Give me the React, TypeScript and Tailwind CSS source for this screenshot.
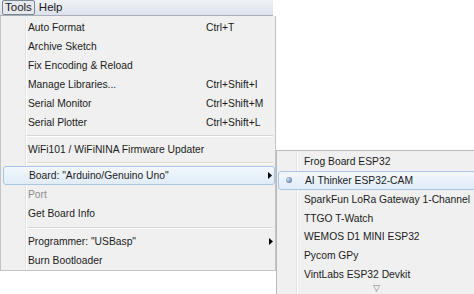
import React from 'react';

type Item =
  | { kind: 'sep'; h: string }
  | { kind: 'item'; label: string; shortcut?: string; sub?: boolean; active?: boolean; disabled?: boolean };

const toolsItems: Item[] = [
  { kind: 'item', label: 'Auto Format', shortcut: 'Ctrl+T' },
  { kind: 'item', label: 'Archive Sketch' },
  { kind: 'item', label: 'Fix Encoding & Reload' },
  { kind: 'item', label: 'Manage Libraries...', shortcut: 'Ctrl+Shift+I' },
  { kind: 'item', label: 'Serial Monitor', shortcut: 'Ctrl+Shift+M' },
  { kind: 'item', label: 'Serial Plotter', shortcut: 'Ctrl+Shift+L' },
  { kind: 'sep', h: 'h-[8px]' },
  { kind: 'item', label: 'WiFi101 / WiFiNINA Firmware Updater' },
  { kind: 'sep', h: 'h-[7px]' },
  { kind: 'item', label: 'Board: "Arduino/Genuino Uno"', sub: true, active: true },
  { kind: 'item', label: 'Port', disabled: true },
  { kind: 'item', label: 'Get Board Info' },
  { kind: 'sep', h: 'h-[9px]' },
  { kind: 'item', label: 'Programmer: "USBasp"', sub: true },
  { kind: 'item', label: 'Burn Bootloader' },
];

const boards = [
  'Frog Board ESP32',
  'AI Thinker ESP32-CAM',
  'SparkFun LoRa Gateway 1-Channel',
  'TTGO T-Watch',
  'WEMOS D1 MINI ESP32',
  'Pycom GPy',
  'VintLabs ESP32 Devkit',
];

const SubArrow = () => (
  <svg width="4" height="7" viewBox="0 0 4 7" className="shrink-0">
    <path d="M0 0 L4 3.5 L0 7 Z" fill="#000" />
  </svg>
);

const App: React.FC = () => {
  return (
    <div className="relative w-[474px] h-[294px] bg-white overflow-hidden text-[10.3px] text-[#1b1b1b] font-['Liberation_Sans',Arial,sans-serif]">
      {/* menu bar */}
      <div className="w-[273px] h-[16px] flex items-stretch bg-gradient-to-b from-[#eef1f6] to-[#dce2ec] border-b border-[#a9afb8] text-[11.5px]">
        <div className="ml-[2px] px-[2px] flex items-center border border-[#7d8590] rounded-[2px] bg-[#e4e8ef]">Tools</div>
        <div className="px-[4px] flex items-center">Help</div>
      </div>

      {/* Tools dropdown */}
      <div className="w-[276px] bg-[#f0f0f0] border-l border-r border-b border-[#c4c4c4] pt-[2px] flex">
        <div className="w-[25px] shrink-0 border-r border-[#e2e3e3]" />
        <div className="flex-1 flex flex-col border-l border-white">
          {toolsItems.map((it, i) =>
            it.kind === 'sep' ? (
              <div key={i} className={`${it.h} flex flex-col justify-center pr-[2px]`}>
                <div className="h-[1px] bg-[#d7d7d7]" />
                <div className="h-[1px] bg-white" />
              </div>
            ) : (
              <div
                key={i}
                className={`h-[19px] flex items-center pr-[2px] ${
                  it.active
                    ? '-ml-[24px] pl-[25px] border border-[#a8c7e6] rounded-[3px] bg-gradient-to-b from-[#f2f7fc] to-[#e1ecf8]'
                    : 'pl-[1px]'
                } ${it.disabled ? 'text-[#8e8e8e]' : ''}`}
              >
                <span className="w-[178px] shrink-0 whitespace-nowrap">{it.label}</span>
                <span className="flex-1 whitespace-nowrap">{it.shortcut}</span>
                {it.sub && <SubArrow />}
              </div>
            )
          )}
        </div>
      </div>

      {/* Board submenu */}
      <div className="absolute left-[276px] top-[150px] w-[200px] h-[146px] bg-[#f0f0f0] border-l border-t border-[#b9b9b9] pt-[1px] flex">
        <div className="w-[20px] shrink-0 border-r border-[#e2e3e3]" />
        <div className="flex-1 flex flex-col border-l border-white">
          {boards.map((b, i) => (
            <div
              key={b}
              className={`h-[19.5px] flex items-center ${
                i === 1
                  ? '-ml-[20px] pl-[7px] border border-[#a8c7e6] rounded-[3px] bg-gradient-to-b from-[#f2f7fc] to-[#e1ecf8]'
                  : 'pl-[6px]'
              }`}
            >
              {i === 1 && (
                <span className="w-[6px] h-[6px] mr-[13px] shrink-0 rounded-full bg-[radial-gradient(circle_at_35%_35%,#cfe0f4,#3d5f8a)]" />
              )}
              <span className="whitespace-nowrap">{b}</span>
            </div>
          ))}
          <div className="h-[12px] flex justify-center pr-[22px] text-[9px] leading-none text-[#777]">▽</div>
        </div>
      </div>
    </div>
  );
};

export default App;
